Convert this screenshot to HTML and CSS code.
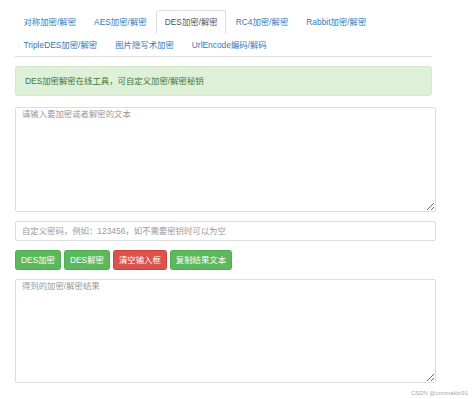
FILE: index.html
```html
<!DOCTYPE html>
<html lang="zh-CN">
  <head>
    <meta charset="UTF-8" />
    <meta name="viewport" content="width=device-width, initial-scale=1.0" />
    <title>DES加密/解密</title>
    <link rel="stylesheet" href="styles.css">
  </head>
  <body>
    <div class="container">
      <ul class="nav-tabs">
        <li><a href="#">对称加密/解密</a></li>
        <li><a href="#">AES加密/解密</a></li>
        <li class="active"><a href="#">DES加密/解密</a></li>
        <li><a href="#">RC4加密/解密</a></li>
        <li><a href="#">Rabbit加密/解密</a></li>
        <li><a href="#">TripleDES加密/解密</a></li>
        <li><a href="#">图片隐写术加密</a></li>
        <li><a href="#">UrlEncode编码/解码</a></li>
      </ul>

      <div class="alert">DES加密解密在线工具，可自定义加密/解密秘钥</div>

      <textarea class="text-box" placeholder="请输入要加密或者解密的文本"></textarea>
      <input class="key-input" type="text" placeholder="自定义密码，例如：123456，如不需要密钥时可以为空" />

      <div class="actions">
        <button class="btn btn-success">DES加密</button>
        <button class="btn btn-success">DES解密</button>
        <button class="btn btn-danger">清空输入框</button>
        <button class="btn btn-success">复制结果文本</button>
      </div>

      <textarea class="text-box result" placeholder="得到的加密/解密结果"></textarea>
    </div>
    <div class="watermark">CSDN @cnnmaldx91</div>
  </body>
</html>
```

FILE: styles.css
```css
body {
  margin: 0;
  padding: 10px 15px 0;
  font-family: "Liberation Sans", "Noto Sans CJK SC", sans-serif;
  font-size: 8.4px;
  color: #333;
  background-color: #fff;
  height: 399px;
  box-sizing: border-box;
  position: relative;
}

.container {
  width: 421px;
}

.nav-tabs {
  list-style: none;
  margin: 0 4px 9px 0;
  padding: 0;
  display: flex;
  flex-wrap: wrap;
  border-bottom: 1px solid #ddd;
}

.nav-tabs li {
  margin: 0 1px -1px 0;
}

.nav-tabs li a {
  display: block;
  padding: 5px 7.5px;
  line-height: 12px;
  border: 1px solid transparent;
  border-radius: 2.5px 2.5px 0 0;
  color: #337ab7;
  text-decoration: none;
}

.nav-tabs li.active a {
  color: #555;
  background-color: #fff;
  border-color: #ddd #ddd transparent;
}

.alert {
  margin-right: 4px;
  padding: 8px 9px;
  line-height: 12px;
  color: #3c763d;
  background-color: #dff0d8;
  border: 1px solid #d6e9c6;
  border-radius: 2.5px;
  margin-bottom: 11px;
}

.text-box,
.key-input {
  display: block;
  width: 100%;
  box-sizing: border-box;
  font-family: inherit;
  font-size: 8.4px;
  color: #555;
  border: 1px solid #ddd;
  border-radius: 2px;
  outline: none;
}

.text-box {
  height: 105px;
  padding: 1px 6px;
  line-height: 10px;
  resize: vertical;
}

.key-input {
  height: 20px;
  margin-top: 9px;
  padding: 0 6px;
}

.text-box::placeholder,
.key-input::placeholder {
  color: #999;
}

.actions {
  display: flex;
  gap: 3px;
  margin: 9px 0;
}

.btn {
  padding: 3px 5px;
  line-height: 12px;
  font-family: inherit;
  font-size: 8.4px;
  color: #fff;
  border: 1px solid transparent;
  border-radius: 2.5px;
  cursor: pointer;
}

.btn-success {
  background-color: #5cb85c;
  border-color: #4cae4c;
}

.btn-danger {
  background-color: #d9534f;
  border-color: #d43f3a;
}

.result {
  height: 104px;
}

.watermark {
  position: absolute;
  right: 6px;
  bottom: 3px;
  font-size: 6px;
  color: #aaa;
}
```
